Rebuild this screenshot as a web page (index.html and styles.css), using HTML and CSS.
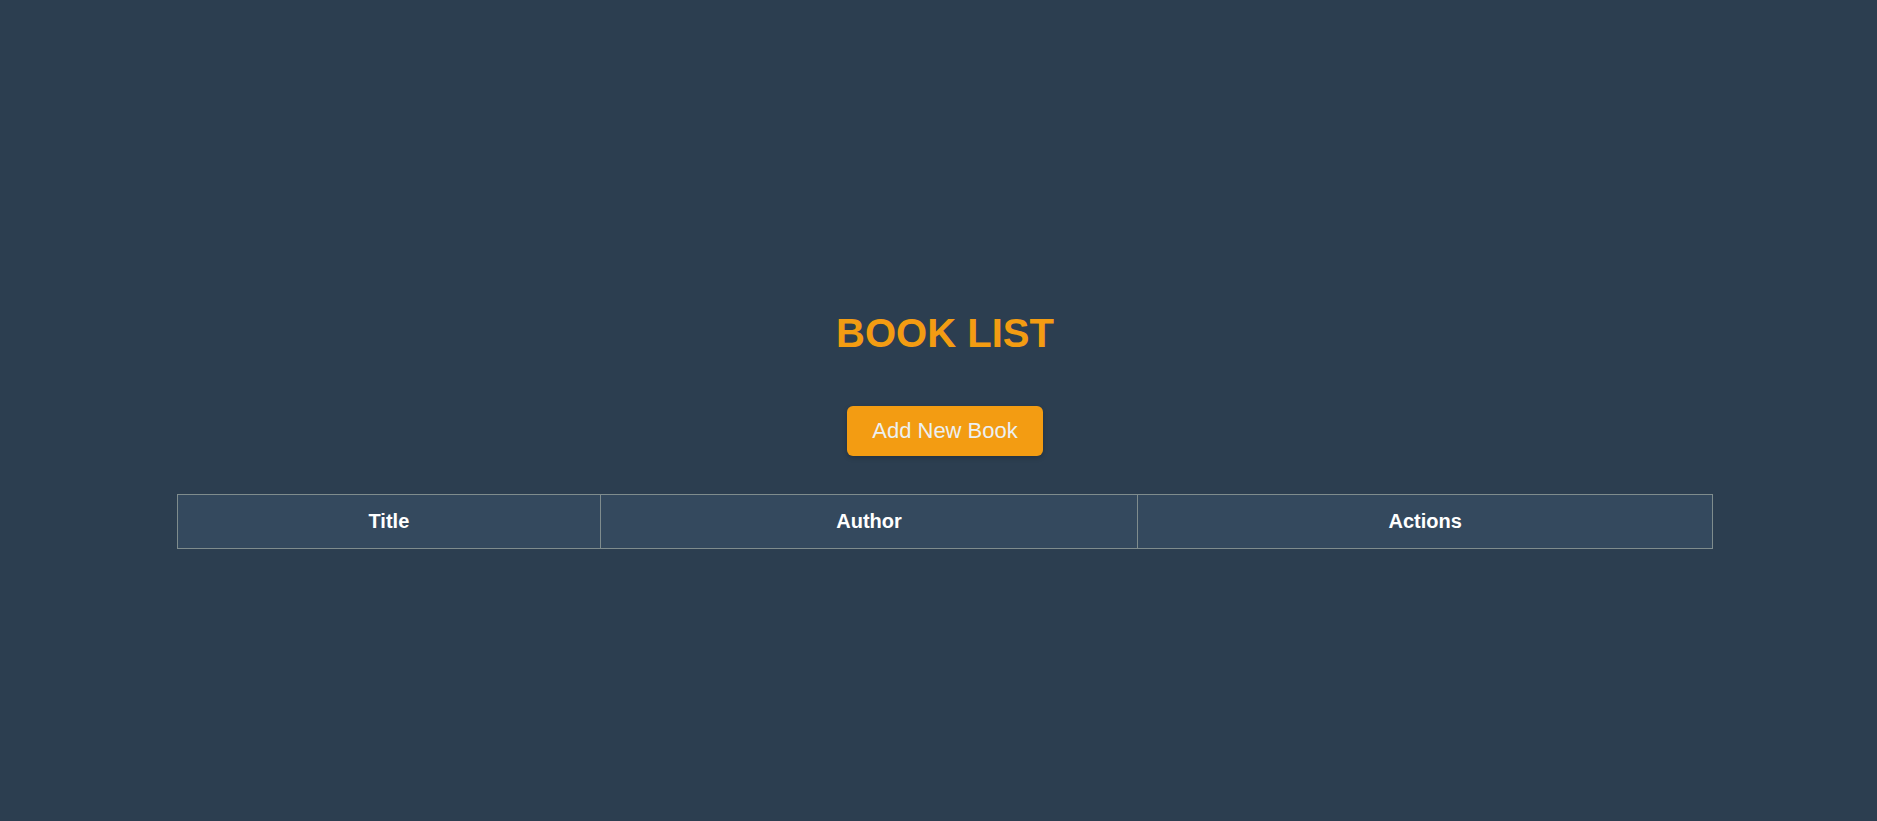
FILE: index.html
```html
<!DOCTYPE html>
<html lang="en">
<head>
<meta charset="utf-8">
<title>Book List</title>
<link rel="stylesheet" href="styles.css">
</head>
<body>
<main class="page">
  <h1 class="heading">BOOK LIST</h1>
  <button class="add-btn" type="button">Add New Book</button>
  <table class="book-table">
    <thead>
      <tr>
        <th class="col-title">Title</th>
        <th class="col-author">Author</th>
        <th class="col-actions">Actions</th>
      </tr>
    </thead>
    <tbody></tbody>
  </table>
</main>
</body>
</html>
```

FILE: styles.css
```css
html, body {
  margin: 0;
  padding: 0;
  background: #2c3e50;
  font-family: "Liberation Sans", Arial, sans-serif;
}

.page {
  min-height: 821px;
  box-sizing: border-box;
  padding: 310px 0 0 13px;
  display: flex;
  flex-direction: column;
  align-items: center;
}

.heading {
  margin: 0;
  font-size: 40px;
  line-height: 46px;
  font-weight: bold;
  color: #f39c12;
}

.add-btn {
  margin-top: 50px;
  background: #f39c12;
  color: #ecf0f1;
  border: none;
  border-radius: 6px;
  font-family: "Liberation Sans", Arial, sans-serif;
  font-size: 22px;
  line-height: 26px;
  padding: 12px 25px;
  box-shadow: 0 2px 5px rgba(0, 0, 0, 0.2);
  cursor: pointer;
}

.book-table {
  margin-top: 38px;
  width: 1536px;
  border-collapse: collapse;
}

.book-table th {
  background: #34495e;
  color: #ffffff;
  border: 1px solid #7f8c8d;
  font-size: 20px;
  line-height: 23px;
  font-weight: bold;
  padding: 15px 12px;
  text-align: center;
}

.col-title { width: 419px; }
.col-author { width: 539px; }
.col-actions { width: 578px; }
```
